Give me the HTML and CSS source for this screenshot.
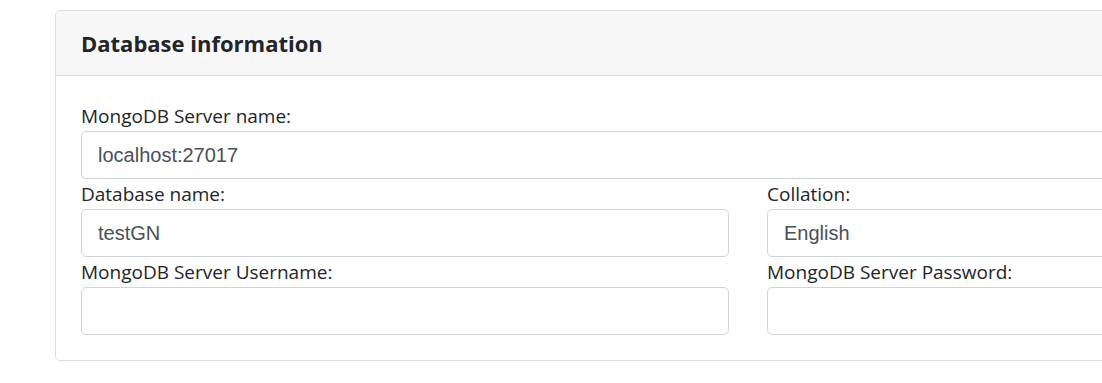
FILE: index.html
```html
<!DOCTYPE html>
<html>
<head>
<meta charset="utf-8">
<link rel="stylesheet" href="styles.css">
</head>
<body>
<div class="page">
  <div class="card">
    <div class="card-header"><h5 class="card-title">Database information</h5></div>
    <div class="card-body">
      <div class="field">
        <label class="label">MongoDB Server name:</label>
        <input class="input" type="text" value="localhost:27017">
      </div>
      <div class="row">
        <div class="field">
          <label class="label">Database name:</label>
          <input class="input" type="text" value="testGN">
        </div>
        <div class="field">
          <label class="label">Collation:</label>
          <input class="input" type="text" value="English">
        </div>
      </div>
      <div class="row">
        <div class="field">
          <label class="label">MongoDB Server Username:</label>
          <input class="input" type="text" value="">
        </div>
        <div class="field">
          <label class="label">MongoDB Server Password:</label>
          <input class="input" type="password" value="">
        </div>
      </div>
    </div>
  </div>
</div>
</body>
</html>
```
FILE: styles.css
```css
html, body {
  margin: 0;
  padding: 0;
  background: #fff;
  overflow: hidden;
}
.page {
  padding: 10px 0 0 55px;
  width: 1386px;
}
.card {
  border: 1px solid #dfdfdf;
  border-radius: 5px;
  background: #fff;
  font-family: "Open Sans", "Noto Sans", sans-serif;
  color: #212529;
}
.card-header {
  background: #f7f7f7;
  border-bottom: 1px solid #dcdcdc;
  border-radius: 5px 5px 0 0;
  padding: 20px 25px;
}
.card-title {
  margin: 0;
  font-size: 22px;
  line-height: 24px;
  font-weight: 700;
}
.card-body {
  padding: 25px;
}
.row {
  display: grid;
  grid-template-columns: 1fr 1fr;
  column-gap: 38px;
}
.label {
  display: block;
  font-size: 19px;
  line-height: 30px;
  margin: 0;
}
.input {
  display: block;
  box-sizing: border-box;
  width: 100%;
  height: 48px;
  padding: 8px 16px;
  font-family: "Liberation Sans", Arial, sans-serif;
  font-size: 20px;
  line-height: 30px;
  color: #495057;
  border: 1px solid #ced4da;
  border-radius: 5px;
  background: #fff;
  margin: 0;
  outline: none;
}
```
